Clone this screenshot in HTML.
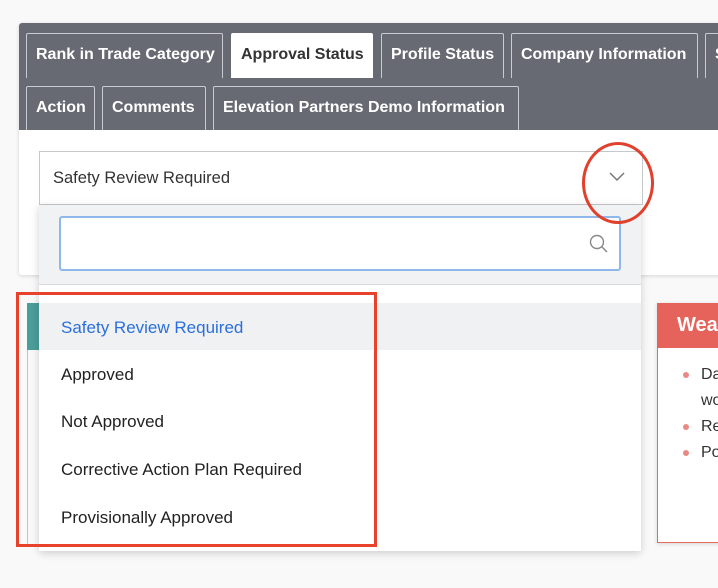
<!DOCTYPE html>
<html><head><style>
body{margin:0;width:718px;height:588px;background:#f9f9f9;font-family:"Liberation Sans",sans-serif;position:relative;overflow:hidden}
.a{position:absolute}
.tab{position:absolute;border:1px solid #c9cbd1;border-bottom:none;color:#fff;font-weight:bold;font-size:16px;box-sizing:border-box;padding-left:9px;line-height:42px;background:#676a73;border-radius:2px 2px 0 0;white-space:nowrap;overflow:hidden}
.opt{position:absolute;left:39px;width:602px;height:47px;line-height:49px;padding-left:22px;box-sizing:border-box;font-size:17px;color:#222}
</style></head><body>
<div class="a" style="left:19px;top:23px;width:710px;height:252px;background:#fff;box-shadow:0 1px 4px rgba(0,0,0,.15);border-radius:3px"></div>
<div class="a" style="left:19px;top:23px;width:710px;height:107px;background:#676a73;border-radius:3px 0 0 0"></div>
<div class="tab" style="left:26px;top:33px;width:197px;height:45px">Rank in Trade Category</div>
<div class="tab" style="left:231px;top:33px;width:142px;height:45px;background:#fff;color:#333;border-color:#fff">Approval Status</div>
<div class="tab" style="left:381px;top:33px;width:123px;height:45px">Profile Status</div>
<div class="tab" style="left:511px;top:33px;width:187px;height:45px">Company Information</div>
<div class="tab" style="left:705px;top:33px;width:30px;height:45px">S</div>
<div class="tab" style="left:26px;top:86px;width:69px;height:44px">Action</div>
<div class="tab" style="left:102px;top:86px;width:104px;height:44px">Comments</div>
<div class="tab" style="left:213px;top:86px;width:306px;height:44px">Elevation Partners Demo Information</div>
<div class="a" style="left:39px;top:151px;width:604px;height:54px;border:1px solid #c6c8cc;box-sizing:border-box;background:#fff;font-size:16.5px;color:#333;line-height:52px;padding-left:13px">Safety Review Required</div>
<svg class="a" style="left:606px;top:170px" width="22" height="14"><path d="M4 3 L11 10 L18 3" fill="none" stroke="#777" stroke-width="1.5"/></svg>
<div class="a" style="left:27px;top:303px;width:12px;height:47px;background:#4a9e9a"></div>
<div class="a" style="left:27px;top:350px;width:1px;height:196px;background:#a5d6a7"></div>
<div class="a" style="left:39px;top:205px;width:602px;height:346px;background:#fff;box-shadow:0 2px 8px rgba(0,0,0,.18)"></div>
<div class="a" style="left:39px;top:205px;width:602px;height:79px;background:#f1f2f4;border-bottom:1px solid #d8d9dc"></div>
<div class="a" style="left:59px;top:216px;width:562px;height:55px;border:2px solid #8fb8ea;border-radius:3px;background:#fff;box-sizing:border-box"></div>
<svg class="a" style="left:588px;top:233px" width="22" height="22"><circle cx="9" cy="9" r="6.5" fill="none" stroke="#888" stroke-width="1.4"/><path d="M14 14 L19 19" stroke="#888" stroke-width="1.5"/></svg>
<div class="opt" style="top:303px;background:#f0f1f3;color:#2a6fdb">Safety Review Required</div>
<div class="opt" style="top:350px">Approved</div>
<div class="opt" style="top:397px">Not Approved</div>
<div class="opt" style="top:445px">Corrective Action Plan Required</div>
<div class="opt" style="top:493px">Provisionally Approved</div>
<div class="a" style="left:582px;top:142px;width:72px;height:82px;border:3px solid #e0402c;border-radius:50%;box-sizing:border-box"></div>
<div class="a" style="left:16px;top:292px;width:361px;height:255px;border:3px solid #e8412c;box-sizing:border-box"></div>
<div class="a" style="left:657px;top:303px;width:70px;height:240px;border:1px solid #e66a5e;box-sizing:border-box;background:#fff;box-shadow:0 1px 4px rgba(0,0,0,.15)"></div>
<div class="a" style="left:657px;top:303px;width:70px;height:45px;background:#e5635a;color:#fff;font-weight:bold;font-size:20px;line-height:45px;padding-left:20px;box-sizing:border-box;border-radius:3px 0 0 0">Wea</div>
<div class="a" style="left:685px;top:362px;font-size:16px;color:#333;line-height:26px">
<div style="position:relative"><span style="position:absolute;left:-2px;top:10px;width:6px;height:6px;border-radius:50%;background:#e88a85"></span><span style="margin-left:16px">Da</span></div>
<div><span style="margin-left:16px">wo</span></div>
<div style="position:relative"><span style="position:absolute;left:-2px;top:10px;width:6px;height:6px;border-radius:50%;background:#e88a85"></span><span style="margin-left:16px">Re</span></div>
<div style="position:relative"><span style="position:absolute;left:-2px;top:10px;width:6px;height:6px;border-radius:50%;background:#e88a85"></span><span style="margin-left:16px">Po</span></div>
</div>
</body></html>
